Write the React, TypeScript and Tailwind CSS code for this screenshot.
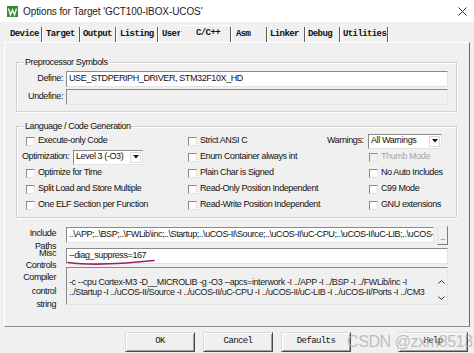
import type { ReactNode } from "react";

const ui = "font-['Liberation_Sans',Arial,sans-serif]";
const mono = "font-['Liberation_Mono','Courier_New',monospace]";
const sunken =
  "border border-t-[#8a8a8a] border-l-[#8a8a8a] border-b-[#e4e4e4] border-r-[#e4e4e4]";

function Check({ label, disabled, className = "" }: { label: string; disabled?: boolean; className?: string }) {
  return (
    <div className={`flex h-[16px] items-center gap-[3px] ${className}`}>
      <span
        className={`h-[9px] w-[9px] shrink-0 ${sunken} ${disabled ? "bg-[#f0f0f0]" : "bg-white"}`}
      />
      <span className={`whitespace-nowrap ${disabled ? "text-[#a8a8a8]" : "text-[#111]"}`}>{label}</span>
    </div>
  );
}

function Select({ value, className = "" }: { value: string; className?: string }) {
  return (
    <div className={`flex h-[15px] items-center bg-white ${sunken} ${className}`}>
      <span className="flex-1 whitespace-nowrap pl-[2px]">{value}</span>
      <span className="mr-[1px] flex h-[11px] w-[11px] items-center justify-center border border-[#dcdcdc] bg-white">
        <svg width="6" height="4" viewBox="0 0 6 4">
          <path d="M0 0H6L3 3.5Z" fill="#111" />
        </svg>
      </span>
    </div>
  );
}

function Group({ title, className = "", children }: { title: string; className?: string; children: ReactNode }) {
  return (
    <div
      className={`relative border border-[#d2d2d2] shadow-[inset_1px_1px_0_#fff,1px_1px_0_#fff] ${className}`}
    >
      <span className="absolute left-[7px] top-[-6px] bg-[#f0f0f0] px-[1px] leading-[11px]">{title}</span>
      {children}
    </div>
  );
}

function Sep() {
  return <span className="h-[15px] w-[2px] border-l border-r border-l-[#5c5c5c] border-r-white" />;
}

function Tab({ label, className }: { label: string; className: string }) {
  return <span className={`flex h-[15px] items-center ${className}`}>{label}</span>;
}

function Btn({ label, className = "" }: { label: string; className?: string }) {
  return (
    <div
      className={`flex h-[20px] w-[70px] items-center justify-center border border-t-[#dcdcdc] border-l-[#dcdcdc] border-b-[#4a4a4a] border-r-[#4a4a4a] bg-[#f0f0f0] shadow-[inset_1px_1px_0_#fff,inset_-1px_-1px_0_#a0a0a0] ${mono} text-[9px] tracking-[-0.6px] text-[#111] ${className}`}
    >
      {label}
    </div>
  );
}

function Lines({ lines, className = "" }: { lines: string[]; className?: string }) {
  return (
    <div className={`flex w-[40px] shrink-0 flex-col items-end ${className}`}>
      {lines.map((l) => (
        <span key={l} className="h-[10px] leading-[10px]">
          {l}
        </span>
      ))}
    </div>
  );
}

export default function App() {
  return (
    <div
      className={`relative h-[353px] w-[474px] overflow-hidden bg-[#f0f0f0] text-[9px] tracking-[-0.4px] text-[#111] ${ui}`}
    >
      {/* title bar */}
      <div className="flex h-[22px] items-center bg-white pl-[7px] pr-[6px]">
        <svg width="11" height="11" viewBox="0 0 11 11">
          <rect width="11" height="11" fill="#2f8a3a" />
          <path d="M1.5 2.5L3.5 9L5.5 4L7.5 9L9.5 2.5" fill="none" stroke="#f4f4e0" strokeWidth="1.4" />
        </svg>
        <span className="ml-[5px] text-[10px] tracking-[-0.1px] text-[#1a1a1a]">
          Options for Target 'GCT100-IBOX-UCOS'
        </span>
        <svg className="ml-auto mr-[1px]" width="9" height="9" viewBox="0 0 9 9">
          <path d="M0.5 0.5L8.5 8.5M8.5 0.5L0.5 8.5" stroke="#333" strokeWidth="1" />
        </svg>
      </div>

      {/* tabs */}
      <div className={`flex h-[20px] items-end pl-[10px] ${mono} text-[9px] font-bold tracking-[-0.6px] text-[#111]`}>
        <Tab label="Device" className="w-[31px]" />
        <Sep />
        <Tab label="Target" className="w-[36px] pl-[3px]" />
        <Sep />
        <Tab label="Output" className="w-[34px] pl-[2px]" />
        <Sep />
        <Tab label="Listing" className="w-[40px] pl-[3px]" />
        <Sep />
        <Tab label="User" className="w-[21px] pl-[3px]" />
        <span className="flex h-[17px] w-[50px] items-start border-l border-t border-l-white border-t-white pl-[15px] pt-[2px] leading-[10px]">
          C/C++
        </span>
        <Sep />
        <Tab label="Asm" className="w-[34px] pl-[4px]" />
        <Sep />
        <Tab label="Linker" className="w-[36px] pl-[2px]" />
        <Sep />
        <Tab label="Debug" className="w-[33px] pl-[2px]" />
        <Sep />
        <Tab label="Utilities" className="w-[46px] pl-[2px]" />
        <Sep />
      </div>

      {/* tab page */}
      <div className="ml-[4px] h-[285px] w-[466px] border border-l-white border-t-white border-r-[#6e6e6e] border-b-[#8c8c8c] pl-[11px] pr-[12px] pt-[19px]">
        <Group title="Preprocessor Symbols" className="h-[50px] pr-[8px] pt-[8px]">
          <div className="flex h-[16px] items-center gap-[3px]">
            <span className="w-[46px] text-right">Define:</span>
            <div className={`flex h-[16px] flex-1 items-center bg-white pl-[2px] ${sunken}`}>
              USE_STDPERIPH_DRIVER, STM32F10X_HD
            </div>
          </div>
          <div className="mt-[2px] flex h-[16px] items-center gap-[3px]">
            <span className="w-[46px] text-right">Undefine:</span>
            <div className={`h-[16px] flex-1 bg-[#f0f0f0] ${sunken}`} />
          </div>
        </Group>

        <Group title="Language / Code Generation" className="mt-[14px] flex h-[92px] pl-[5px] pt-[6px]">
          <div className="w-[166px]">
            <Check label="Execute-only Code" className="ml-[4px]" />
            <div className="flex h-[16px] items-center">
              <span className="w-[51px]">Optimization:</span>
              <Select value="Level 3 (-O3)" className="w-[70px]" />
            </div>
            <Check label="Optimize for Time" className="ml-[4px]" />
            <Check label="Split Load and Store Multiple" className="ml-[4px]" />
            <Check label="One ELF Section per Function" className="ml-[4px]" />
          </div>
          <div className="w-[139px]">
            <Check label="Strict ANSI C" />
            <Check label="Enum Container always int" />
            <Check label="Plain Char is Signed" />
            <Check label="Read-Only Position Independent" />
            <Check label="Read-Write Position Independent" />
          </div>
          <div className="flex-1">
            <div className="flex h-[16px] items-center">
              <span className="w-[41px]">Warnings:</span>
              <Select value="All Warnings" className="w-[74px]" />
            </div>
            <Check label="Thumb Mode" disabled className="ml-[42px]" />
            <Check label="No Auto Includes" className="ml-[42px]" />
            <Check label="C99 Mode" className="ml-[42px]" />
            <Check label="GNU extensions" className="ml-[42px]" />
          </div>
        </Group>

        <div className="mt-[8px] pr-[9px]">
          <div className="flex h-[20px] items-start gap-[10px]">
            <Lines lines={["Include", "Paths"]} className="gap-[3px] pt-[2px]" />
            <div className={`mt-[1px] flex h-[16px] min-w-0 flex-1 items-center overflow-hidden whitespace-nowrap bg-white pl-[2px] ${sunken}`}>
              ..\APP;..\BSP;..\FWLib\inc;..\Startup;..\uCOS-II\Source;..\uCOS-II\uC-CPU;..\uCOS-II\uC-LIB;..\uCOS-II\Ports;..\CM3
            </div>
            <div className="-ml-[7px] flex h-[19px] w-[11px] shrink-0 items-end justify-center border border-t-[#e8e8e8] border-l-[#e8e8e8] border-b-[#7a7a7a] border-r-[#7a7a7a] pb-[3px] text-[7px] leading-none">
              ...
            </div>
          </div>
          <div className="flex h-[19px] items-start gap-[10px]">
            <Lines lines={["Misc", "Controls"]} className="gap-[2px] pt-[2px]" />
            <div className={`mt-[2px] flex h-[16px] flex-1 items-center bg-white pl-[2px] ${sunken}`}>
              --diag_suppress=167
            </div>
          </div>
          <div className="flex h-[40px] items-start gap-[10px]">
            <Lines lines={["Compiler", "control", "string"]} className="gap-[3.5px] pt-[7px]" />
            <div className={`mt-[2px] flex h-[38px] min-w-0 flex-1 bg-[#f0f0f0] ${sunken}`}>
              <div className="min-w-0 flex-1 overflow-hidden whitespace-nowrap pl-[2px] pt-[9px] leading-[10px] text-[#1c1c1c]">
                <div>-c --cpu Cortex-M3 -D__MICROLIB -g -O3 --apcs=interwork -I ../APP -I ../BSP -I ../FWLib/inc -I</div>
                <div>../Startup -I ../uCOS-II/Source -I ../uCOS-II/uC-CPU -I ../uCOS-II/uC-LIB -I ../uCOS-II/Ports -I ../CM3</div>
              </div>
              <div className="flex w-[12px] shrink-0 flex-col items-center justify-between pb-[4px] pt-[12px]">
                <svg width="7" height="4" viewBox="0 0 7 4">
                  <path d="M0.5 3.5L3.5 0.5L6.5 3.5" fill="none" stroke="#333" />
                </svg>
                <svg width="7" height="4" viewBox="0 0 7 4">
                  <path d="M0.5 0.5L3.5 3.5L6.5 0.5" fill="none" stroke="#333" />
                </svg>
              </div>
            </div>
          </div>
        </div>
      </div>

      {/* buttons */}
      <div className="mt-[5px] flex h-[20px] pl-[125px]">
        <Btn label="OK" />
        <Btn label="Cancel" className="ml-[8px]" />
        <Btn label="Defaults" className="ml-[8px]" />
        <Btn label="Help" className="ml-[47px]" />
      </div>

      {/* hand-drawn underline */}
      <svg className="absolute left-[67px] top-[257px]" width="90" height="9" viewBox="0 0 90 9">
        <path d="M1 5.5C20 8 45 8 87 3.5" fill="none" stroke="#9c1f6c" strokeWidth="1.6" strokeLinecap="round" />
      </svg>

      {/* watermark */}
      <span className="absolute left-[347px] top-[331px] whitespace-nowrap text-[16px] leading-[22px] tracking-[-0.4px] text-[#b4b4b4]/85">
        CSDN @zxm8513
      </span>
    </div>
  );
}
